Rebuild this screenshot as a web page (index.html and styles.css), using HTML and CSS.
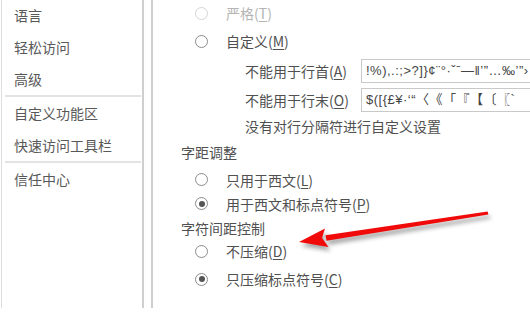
FILE: index.html
```html
<!DOCTYPE html>
<html lang="zh-CN">
<head>
  <meta charset="UTF-8">
  <title>选项 - 版式</title>
  <link rel="stylesheet" href="styles.css">
</head>
<body>

<div id="window">
  <div class="sidebar">
    <div class="nav-item">语言</div>
    <div class="nav-item">轻松访问</div>
    <div class="nav-item">高级</div>
    <div class="nav-sep"></div>
    <div class="nav-item">自定义功能区</div>
    <div class="nav-item">快速访问工具栏</div>
    <div class="nav-sep"></div>
    <div class="nav-item">信任中心</div>
  </div>

  <div class="content">
    <div class="row r-strict disabled">
      <span class="radio"></span>
      <span>严格(<u>T</u>)</span>
    </div>
    <div class="row r-custom">
      <span class="radio"></span>
      <span>自定义(<u>M</u>)</span>
    </div>
    <div class="row field r-first">
      <span class="field-label">不能用于行首(<u>A</u>)</span>
      <div class="box">!%),.:;&gt;?]}¢¨°·ˇˉ―‖’”…‰’”›</div>
    </div>
    <div class="row field r-last">
      <span class="field-label">不能用于行末(<u>O</u>)</span>
      <div class="box">$([{£¥·‘“〈《「『【〔〖`</div>
    </div>
    <div class="row note">没有对行分隔符进行自定义设置</div>

    <div class="heading h-kern">字距调整</div>
    <div class="row r-west">
      <span class="radio"></span>
      <span>只用于西文(<u>L</u>)</span>
    </div>
    <div class="row r-punct">
      <span class="radio checked"></span>
      <span>用于西文和标点符号(<u>P</u>)</span>
    </div>

    <div class="heading h-space">字符间距控制</div>
    <div class="row r-none">
      <span class="radio"></span>
      <span>不压缩(<u>D</u>)</span>
    </div>
    <div class="row r-compress">
      <span class="radio checked"></span>
      <span>只压缩标点符号(<u>C</u>)</span>
    </div>
  </div>
</div>

<svg class="arrow" width="530" height="320" viewBox="0 0 530 320">
  <polygon points="487.6,211.6 488.4,214.4 326.5,240.8 325.5,235.2" fill="#f00a0a"/>
  <polygon points="299,242 325,228.5 322,238 328.5,247" fill="#f00a0a"/>
</svg>

</body>
</html>
```

FILE: styles.css
```css
body {
  margin: 0;
  background-color: #fff;
  font-family: "Noto Sans CJK SC", "Liberation Sans", sans-serif;
  font-size: 14px;
  color: #505050;
  overflow: hidden;
  text-spacing-trim: space-all;
}

u {
  text-decoration-thickness: 1px;
  text-underline-offset: 2px;
}

#window {
  display: flex;
  height: 308px;
  width: 530px;
}

.sidebar {
  width: 140px;
  flex: none;
  margin-left: 1px;
  border-left: 1px solid #dcdcdc;
  border-right: 2px solid #cfcfcf;
}

.nav-item {
  height: 32px;
  line-height: 32px;
  padding-left: 12px;
  color: #585858;
  white-space: nowrap;
}

.nav-item:first-child {
  height: 31px;
  line-height: 30px;
}

.nav-sep {
  height: 2px;
  margin: 0 1px 0 3px;
  background-color: #e3e3e3;
}

.content {
  flex: 1;
  margin-left: 7px;
  border-left: 2px solid #cfcfcf;
  padding-left: 28px;
  min-width: 0;
}

.row {
  display: flex;
  align-items: center;
  white-space: nowrap;
  padding-left: 14px;
}

.radio {
  width: 11px;
  height: 11px;
  flex: none;
  border: 1px solid #8c8c8c;
  border-radius: 50%;
  margin-right: 18px;
  position: relative;
  background-color: #fff;
}

.radio.checked::after {
  content: "";
  position: absolute;
  left: 2.5px;
  top: 2.5px;
  width: 6px;
  height: 6px;
  border-radius: 50%;
  background-color: #555;
}

.disabled {
  color: #b4b4b4;
}

.disabled .radio {
  border-color: #d4d4d4;
}

.r-strict { height: 26px; }
.r-custom { height: 30px; }

.field {
  padding-left: 64px;
}

.r-first { height: 30px; }
.r-last { height: 28px; }

.field-label {
  width: 116px;
  flex: none;
}

.box {
  flex: 1;
  min-width: 0;
  height: 22px;
  line-height: 22px;
  border: 1px solid #c9c9c9;
  border-right: none;
  padding-left: 4px;
  overflow: hidden;
  font-family: "Liberation Sans", "Noto Sans CJK SC", sans-serif;
  font-size: 13px;
  letter-spacing: 0.5px;
  color: #444;
}

.note {
  height: 24px;
  padding-left: 64px;
}

.heading {
  display: flex;
  align-items: center;
  white-space: nowrap;
}

.h-kern { height: 28px; }
.r-west { height: 27px; }
.r-punct { height: 21px; }
.h-space { height: 28px; }
.r-none { height: 18px; }
.r-compress { height: 38px; }

.arrow {
  position: absolute;
  left: 0;
  top: 0;
  pointer-events: none;
  filter: drop-shadow(2px 4px 2px rgba(0, 0, 0, 0.35));
}
```
